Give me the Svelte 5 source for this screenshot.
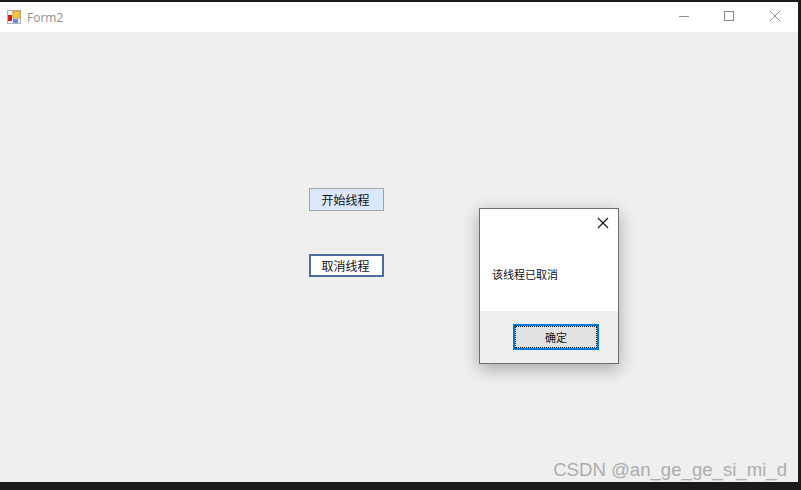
<script>
  const buttons = [
    { label: "开始线程", kind: "hover" },
    { label: "取消线程", kind: "focus" }
  ];
</script>

<style>
  :global(body) {
    margin: 0;
    background: #1a1a1a;
  }

  .screen {
    width: 801px;
    height: 490px;
    overflow: hidden;
    font-family: "Noto Sans CJK SC", "Liberation Sans", sans-serif;
  }

  .window {
    position: relative;
    width: 798px;
    height: 480px;
    margin-top: 2px;
    display: flex;
    flex-direction: column;
    background: #efefef;
  }

  .titlebar {
    height: 30px;
    flex: none;
    display: flex;
    align-items: center;
    background: #fff;
    padding-left: 7px;
  }

  .titlebar .name {
    margin-left: 5px;
    font-family: "Open Sans", "Liberation Sans", sans-serif;
    font-size: 12px;
    color: #8f8f8f;
  }

  .controls {
    margin-left: auto;
    display: flex;
  }

  .controls svg {
    display: block;
    width: 46px;
    height: 30px;
  }

  .form {
    flex: 1;
    display: flex;
    flex-direction: column;
    align-items: flex-start;
    gap: 43px;
    padding: 156px 0 0 309px;
  }

  .btn {
    box-sizing: border-box;
    width: 75px;
    height: 23px;
    padding: 0 2px 0 0;
    font-family: inherit;
    font-size: 12px;
    line-height: 1;
    color: #111;
    background: #fff;
  }

  .btn.hover {
    background: #dbe7fb;
    border: 1px solid #a3a5a9;
  }

  .btn.focus {
    border: 2px solid #4d6d9f;
  }

  .dialog {
    position: absolute;
    left: 479px;
    top: 206px;
    box-sizing: border-box;
    width: 140px;
    height: 156px;
    display: flex;
    flex-direction: column;
    background: #fff;
    border: 1px solid #6e6e6e;
    box-shadow: 0 5px 16px rgba(0, 0, 0, 0.3);
  }

  .dialog .top {
    flex: 1;
    position: relative;
    display: flex;
    align-items: center;
    padding: 28px 0 0 12px;
    font-size: 11px;
    color: #111;
  }

  .dialog .close {
    position: absolute;
    top: 8px;
    right: 9px;
    display: block;
    width: 12px;
    height: 12px;
  }

  .dialog .bottom {
    height: 52px;
    flex: none;
    box-sizing: border-box;
    background: #efefef;
    padding: 13px 0 0 33px;
  }

  .dialog .ok {
    box-sizing: border-box;
    display: block;
    width: 86px;
    height: 26px;
    padding: 0;
    background: #e1e1e1;
    border: 2px solid #0078d7;
    outline: 1px dotted #111;
    outline-offset: -3px;
    font-family: inherit;
    font-size: 11px;
    color: #111;
  }

  .mark {
    position: absolute;
    right: 11px;
    bottom: 1px;
    font-family: "Liberation Sans", sans-serif;
    font-size: 18.6px;
    line-height: 22px;
    color: #adadad;
    white-space: nowrap;
  }
</style>

<div class="screen">
  <div class="window">
    <header class="titlebar">
      <svg width="15" height="15" viewBox="0 0 15 15">
        <rect x="0.5" y="0.5" width="13" height="13" fill="#f4f4f4" stroke="#b4b4b4" />
        <rect x="6" y="1" width="7" height="7" fill="#f7c93e" stroke="#b98a1c" stroke-width="0.7" />
        <rect x="1" y="5" width="4" height="6" fill="#c9201c" />
        <rect x="6" y="9" width="5" height="4" fill="#5b94e6" />
      </svg>
      <span class="name">Form2</span>
      <div class="controls">
        <svg viewBox="0 0 46 30">
          <path d="M19 14.5h10" stroke="#8c8c8c" fill="none" />
        </svg>
        <svg viewBox="0 0 46 30">
          <rect x="18.5" y="9.5" width="9" height="9" stroke="#8c8c8c" fill="none" />
        </svg>
        <svg viewBox="0 0 46 30">
          <path d="M18 9l10 10M28 9l-10 10" stroke="#8c8c8c" fill="none" />
        </svg>
      </div>
    </header>

    <main class="form">
      {#each buttons as b}
        <button class="btn {b.kind}">{b.label}</button>
      {/each}
    </main>

    <div class="dialog">
      <div class="top">
        <svg class="close" viewBox="0 0 12 12">
          <path d="M1 1l10 10M11 1L1 11" stroke="#111" stroke-width="1.1" fill="none" />
        </svg>
        <span>该线程已取消</span>
      </div>
      <div class="bottom">
        <button class="ok">确定</button>
      </div>
    </div>

    <div class="mark">CSDN @an_ge_ge_si_mi_d</div>
  </div>
</div>
